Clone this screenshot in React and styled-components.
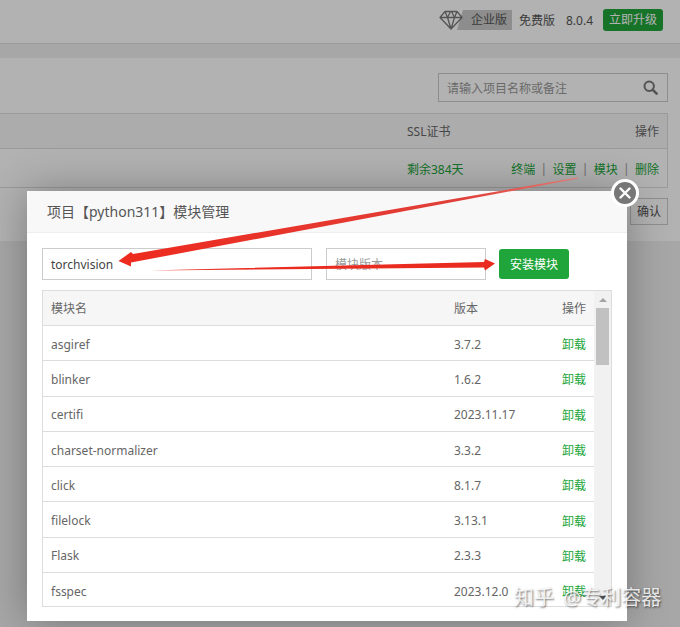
import React from 'react'
import styled, { createGlobalStyle } from 'styled-components'

const modules = [
  ['asgiref', '3.7.2'],
  ['blinker', '1.6.2'],
  ['certifi', '2023.11.17'],
  ['charset-normalizer', '3.3.2'],
  ['click', '8.1.7'],
  ['filelock', '3.13.1'],
  ['Flask', '2.3.3'],
  ['fsspec', '2023.12.0'],
]

const App = () => {
  return (
    <Page>
      <GlobalStyle />
      <TopBar>
        <Diamond />
        <EnterpriseTag>企业版</EnterpriseTag>
        <TopText>免费版</TopText>
        <TopText>8.0.4</TopText>
        <UpgradeButton>立即升级</UpgradeButton>
      </TopBar>
      <Strip />
      <Panel>
        <SearchRow>
          <SearchBox>
            <SearchHint>请输入项目名称或备注</SearchHint>
            <SearchIcon />
          </SearchBox>
        </SearchRow>
        <SiteTable>
          <SiteRow $head>
            <span />
            <span>SSL证书</span>
            <Ops>操作</Ops>
          </SiteRow>
          <SiteRow>
            <span />
            <GreenText>剩余384天</GreenText>
            <Ops>
              <GreenText>终端</GreenText>
              <Sep>|</Sep>
              <GreenText>设置</GreenText>
              <Sep>|</Sep>
              <GreenText>模块</GreenText>
              <Sep>|</Sep>
              <GreenText>删除</GreenText>
            </Ops>
          </SiteRow>
        </SiteTable>
        <PagerRow>
          <ConfirmButton>确认</ConfirmButton>
        </PagerRow>
      </Panel>

      <Mask />

      <Modal>
        <ModalTitle>项目【python311】模块管理</ModalTitle>
        <ModalBody>
          <InstallForm>
            <NameInput value="torchvision" readOnly />
            <VersionInput placeholder="模块版本" readOnly />
            <InstallButton type="button">安装模块</InstallButton>
          </InstallForm>
          <ModuleBox>
            <ModuleList>
              <ModuleRow $head>
                <span>模块名</span>
                <span>版本</span>
                <ActionCell>操作</ActionCell>
              </ModuleRow>
              {modules.map((item) => (
                <ModuleRow key={item[0]}>
                  <span>{item[0]}</span>
                  <span>{item[1]}</span>
                  <ActionCell $link>卸载</ActionCell>
                </ModuleRow>
              ))}
            </ModuleList>
            <Track>
              <TrackArrow />
              <Thumb />
              <TrackArrow $down />
            </Track>
          </ModuleBox>
        </ModalBody>
      </Modal>

      <CloseButton>
        <svg width="12" height="12" viewBox="0 0 12 12">
          <path d="M1.5 1.5L10.5 10.5M10.5 1.5L1.5 10.5" stroke="#fff" strokeWidth="2.4" strokeLinecap="round" />
        </svg>
      </CloseButton>

      <Arrows viewBox="0 0 680 627">
        <defs>
          <linearGradient id="fadeOne" x1="578" y1="178" x2="119" y2="261" gradientUnits="userSpaceOnUse">
            <stop offset="0" stopColor="#e8766e" />
            <stop offset="0.25" stopColor="#e0403a" />
            <stop offset="1" stopColor="#ee2a1e" />
          </linearGradient>
        </defs>
        <path d="M578 177.5L133 254L131 252L118.5 261L131 266.5L131 262.5L578 178.5Z" fill="url(#fadeOne)" />
        <path d="M150 270.5L484 262L485 259L495 263.5L485 270.5L484 267.5Z" fill="#ea2b1f" />
      </Arrows>

      <Watermark>知乎 @专利容器</Watermark>
    </Page>
  )
}

export default App

const Diamond = () => (
  <DiamondSvg viewBox="0 0 24 20">
    <path
      d="M6 1.5H18L23 7.5L12 19L1 7.5ZM1 7.5H23M8.5 7.5L12 19L15.5 7.5L12.5 1.5H11.5ZM6 1.5L8.5 7.5M18 1.5L15.5 7.5"
      fill="none"
      stroke="#555"
      strokeWidth="1.3"
      strokeLinejoin="round"
    />
  </DiamondSvg>
)

const SearchIcon = () => (
  <svg width="15" height="15" viewBox="0 0 15 15">
    <circle cx="6.2" cy="6.2" r="4.7" fill="none" stroke="#777" strokeWidth="2" />
    <path d="M9.8 9.8L13.6 13.6" stroke="#777" strokeWidth="2.6" strokeLinecap="round" />
  </svg>
)

const GlobalStyle = createGlobalStyle`
  html, body {
    margin: 0;
    padding: 0;
    height: 100%;
    background: #f0f0f0;
    overflow: hidden;
  }
  * {
    box-sizing: border-box;
  }
`

const Page = styled.div`
  position: relative;
  width: 680px;
  height: 627px;
  overflow: hidden;
  background: #f0f0f0;
  font-family: "Noto Sans", "Noto Sans CJK SC", sans-serif;
  font-size: 12px;
  color: #666;
`

const TopBar = styled.div`
  height: 44px;
  background: #fff;
  border-bottom: 1px solid #ddd;
  display: flex;
  align-items: center;
  justify-content: flex-end;
  padding-right: 17px;
  padding-bottom: 3px;
`

const DiamondSvg = styled.svg`
  width: 24px;
  height: 20px;
  margin-right: -6px;
  position: relative;
  z-index: 1;
`

const EnterpriseTag = styled.div`
  width: 55px;
  height: 20px;
  line-height: 20px;
  text-align: right;
  padding-right: 5px;
  font-size: 12px;
  color: #555;
  background: #cacaca;
  clip-path: polygon(6px 0, 100% 0, 100% 100%, 0 100%);
`

const TopText = styled.span`
  margin-left: 7px;
  margin-right: 4px;
  font-size: 12px;
  color: #555;
`

const UpgradeButton = styled.div`
  margin-left: 6px;
  width: 60px;
  height: 22px;
  line-height: 22px;
  text-align: center;
  border-radius: 3px;
  background: #20a53a;
  color: #fff;
  font-size: 12px;
`

const Strip = styled.div`
  height: 14px;
  background: #f0f0f0;
`

const Panel = styled.div`
  height: 183px;
  background: #fff;
  padding: 15px 12px 0 0;
`

const SearchRow = styled.div`
  display: flex;
  justify-content: flex-end;
`

const SearchBox = styled.div`
  width: 230px;
  height: 29px;
  border: 1px solid #ccc;
  display: flex;
  align-items: center;
  justify-content: space-between;
  padding: 0 9px 0 8px;
`

const SearchHint = styled.span`
  color: #999;
  font-size: 12px;
`

const SiteTable = styled.div`
  margin-top: 11px;
  border: 1px solid #ddd;
  border-left: none;
`

const SiteRow = styled.div`
  display: grid;
  grid-template-columns: 407px 1fr auto;
  align-items: center;
  padding-right: 8px;
  height: ${(p) => (p.$head ? '35px' : '37px')};
  background: ${(p) => (p.$head ? '#f6f6f6' : '#fff')};
  border-bottom: ${(p) => (p.$head ? '1px solid #ddd' : 'none')};
  margin-bottom: ${(p) => (p.$head ? '1px' : '0')};
`

const Ops = styled.span`
  display: flex;
  align-items: center;
`

const GreenText = styled.span`
  color: #20a53a;
`

const Sep = styled.span`
  margin: 0 5.3px;
  color: #999;
`

const PagerRow = styled.div`
  margin-top: 10px;
  display: flex;
  justify-content: flex-end;
`

const ConfirmButton = styled.div`
  width: 38px;
  height: 27px;
  line-height: 25px;
  text-align: center;
  border: 1px solid #ccc;
  color: #555;
`

const Mask = styled.div`
  position: absolute;
  inset: 0;
  background: rgba(0, 0, 0, 0.3);
`

const Modal = styled.div`
  position: absolute;
  left: 27px;
  top: 191px;
  width: 600px;
  height: 430px;
  background: #fff;
  box-shadow: 0 0 40px rgba(0, 0, 0, 0.3);
  display: flex;
  flex-direction: column;
`

const ModalTitle = styled.div`
  height: 42px;
  line-height: 41px;
  padding-left: 20px;
  font-size: 14px;
  color: #555;
  background: #f8f8f8;
  border-bottom: 1px solid #eee;
`

const ModalBody = styled.div`
  padding: 15px 15px 0;
`

const InstallForm = styled.div`
  display: flex;
  align-items: center;
`

const NameInput = styled.input`
  width: 270px;
  height: 32px;
  border: 1px solid #ccc;
  padding: 0 8px;
  outline: none;
  font: inherit;
  font-size: 12px;
  color: #444;
`

const VersionInput = styled(NameInput)`
  width: 160px;
  margin-left: 14px;
  &::placeholder {
    color: #999;
    opacity: 1;
  }
`

const InstallButton = styled.button`
  width: 70px;
  height: 30px;
  margin-left: 13px;
  border: none;
  border-radius: 3px;
  background: #20a53a;
  color: #fff;
  font: inherit;
  font-size: 12px;
`

const ModuleBox = styled.div`
  margin-top: 10px;
  width: 570px;
  height: 317px;
  border: 1px solid #ddd;
  display: flex;
  overflow: hidden;
`

const ModuleList = styled.div`
  flex: 1;
  min-width: 0;
`

const ModuleRow = styled.div`
  display: grid;
  grid-template-columns: 403px 1fr auto;
  align-items: center;
  padding: ${(p) => (p.$head ? '0 8px' : '2px 8px 0')};
  height: ${(p) => (p.$head ? '35px' : '35.3px')};
  background: ${(p) => (p.$head ? '#f6f6f6' : '#fff')};
  border-bottom: 1px solid #ddd;
  color: #666;
`

const ActionCell = styled.span`
  color: ${(p) => (p.$link ? '#20a53a' : '#666')};
`

const Track = styled.div`
  width: 17px;
  background: #f1f1f1;
  display: flex;
  flex-direction: column;
  align-items: center;
`

const TrackArrow = styled.div`
  width: 0;
  height: 0;
  margin: ${(p) => (p.$down ? '5px 0 6px' : '7px 0 6px')};
  border-left: 4px solid transparent;
  border-right: 4px solid transparent;
  border-${(p) => (p.$down ? 'top' : 'bottom')}: 4px solid ${(p) => (p.$down ? '#505050' : '#a3a3a3')};
`

const Thumb = styled.div`
  width: 13px;
  height: 57px;
  background: #c1c1c1;
  margin-bottom: auto;
`

const CloseButton = styled.div`
  position: absolute;
  left: 611px;
  top: 179px;
  width: 28px;
  height: 28px;
  border-radius: 50%;
  border: 3px solid #fff;
  background: #777;
  display: flex;
  align-items: center;
  justify-content: center;
`

const Arrows = styled.svg`
  position: absolute;
  left: 0;
  top: 0;
  width: 680px;
  height: 627px;
  pointer-events: none;
`

const Watermark = styled.div`
  position: absolute;
  left: 514px;
  top: 585px;
  font-size: 20px;
  line-height: 26px;
  word-spacing: 4px;
  white-space: nowrap;
  color: rgba(255, 255, 255, 0.82);
  text-shadow: 1px 1px 2px rgba(0, 0, 0, 0.55);
`
